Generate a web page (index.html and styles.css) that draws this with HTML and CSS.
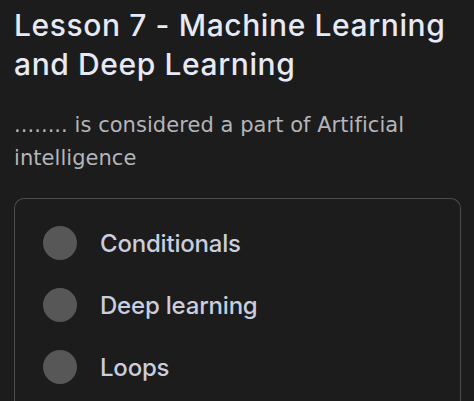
FILE: index.html
```html
<!DOCTYPE html>
<html>
<head>
<meta charset="utf-8">
<link rel="stylesheet" href="styles.css">
</head>
<body>
<div class="page">
  <h1 class="title">Lesson 7 - Machine Learning and Deep Learning</h1>
  <p class="question">........ is considered a part of Artificial intelligence</p>
  <div class="options">
    <div class="option"><span class="radio"></span><span class="label">Conditionals</span></div>
    <div class="option"><span class="radio"></span><span class="label">Deep learning</span></div>
    <div class="option"><span class="radio"></span><span class="label">Loops</span></div>
  </div>
</div>
</body>
</html>
```
FILE: styles.css
```css
html, body {
  margin: 0;
  padding: 0;
  background: #1b1c1b;
  height: 100%;
  overflow: hidden;
}
.page {
  padding: 6px 13px 0 14px;
}
.title {
  margin: 0;
  font-family: Inter, "Noto Sans", sans-serif;
  font-weight: 500;
  font-size: 30px;
  line-height: 39px;
  letter-spacing: 0.6px;
  color: #e6e9f7;
}
.question {
  margin: 25px 0 0 0;
  font-family: "DejaVu Sans", sans-serif;
  font-size: 21px;
  line-height: 33px;
  letter-spacing: 0.05px;
  color: #b4b5ba;
}
.options {
  margin-top: 23px;
  border: 1px solid #4a4d4f;
  border-bottom: none;
  border-radius: 10px 10px 0 0;
  padding: 27px 0 20px 28px;
  display: flex;
  flex-direction: column;
  gap: 28px;
}
.option {
  display: flex;
  align-items: center;
  gap: 23px;
  height: 34px;
}
.radio {
  width: 34px;
  height: 34px;
  border-radius: 50%;
  background: #575757;
  flex: none;
}
.label {
  font-family: Inter, "Noto Sans", sans-serif;
  font-weight: 500;
  font-size: 24px;
  color: #c9cddd;
  letter-spacing: -0.2px;
}
```
